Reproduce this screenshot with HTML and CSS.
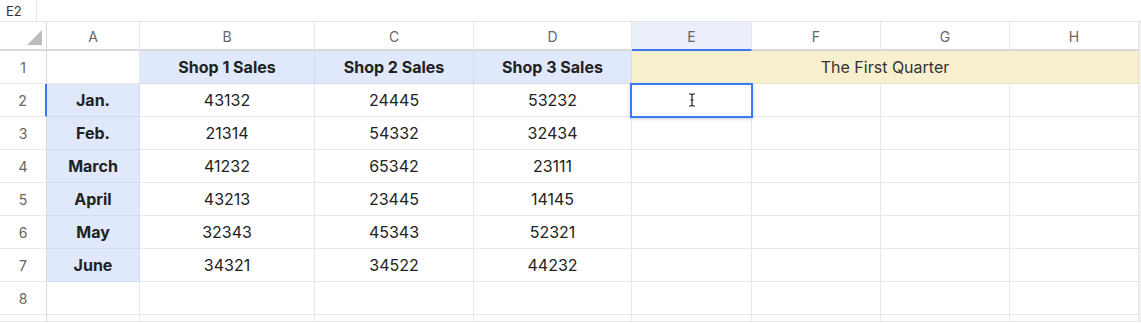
FILE: index.html
```html
<!DOCTYPE html>
<html lang="en">
<head>
  <meta charset="UTF-8">
  <meta name="viewport" content="width=device-width, initial-scale=1.0">
  <title>Sheet</title>
  <link rel="stylesheet" href="styles.css">
</head>
<body>
  <div class="formula-bar">
    <div class="name-box">E2</div>
    <div class="formula-input"></div>
  </div>

  <div class="sheet">
    <!-- column headers -->
    <div class="corner"><span class="corner-mark"></span></div>
    <div class="col-head">A</div>
    <div class="col-head">B</div>
    <div class="col-head">C</div>
    <div class="col-head">D</div>
    <div class="col-head active">E</div>
    <div class="col-head">F</div>
    <div class="col-head">G</div>
    <div class="col-head">H</div>
    <div class="edge"></div>

    <!-- row 1 -->
    <div class="row-head">1</div>
    <div class="cell"></div>
    <div class="cell title">Shop 1 Sales</div>
    <div class="cell title">Shop 2 Sales</div>
    <div class="cell title">Shop 3 Sales</div>
    <div class="cell merged">The First Quarter</div>
    <div class="edge"></div>

    <!-- row 2 -->
    <div class="row-head active">2</div>
    <div class="cell title">Jan.</div>
    <div class="cell">43132</div>
    <div class="cell">24445</div>
    <div class="cell">53232</div>
    <div class="cell selected">
      <svg class="ibeam" width="8" height="14" viewBox="0 0 8 14">
        <path d="M1 1h2l1 1 1-1h2M4 2v10M1 13h2l1-1 1 1h2M2.5 7h3" fill="none" stroke="#222" stroke-width="1.2"/>
      </svg>
    </div>
    <div class="cell"></div>
    <div class="cell"></div>
    <div class="cell"></div>
    <div class="edge"></div>

    <!-- row 3 -->
    <div class="row-head">3</div>
    <div class="cell title">Feb.</div>
    <div class="cell">21314</div>
    <div class="cell">54332</div>
    <div class="cell">32434</div>
    <div class="cell"></div>
    <div class="cell"></div>
    <div class="cell"></div>
    <div class="cell"></div>
    <div class="edge"></div>

    <!-- row 4 -->
    <div class="row-head">4</div>
    <div class="cell title">March</div>
    <div class="cell">41232</div>
    <div class="cell">65342</div>
    <div class="cell">23111</div>
    <div class="cell"></div>
    <div class="cell"></div>
    <div class="cell"></div>
    <div class="cell"></div>
    <div class="edge"></div>

    <!-- row 5 -->
    <div class="row-head">5</div>
    <div class="cell title">April</div>
    <div class="cell">43213</div>
    <div class="cell">23445</div>
    <div class="cell">14145</div>
    <div class="cell"></div>
    <div class="cell"></div>
    <div class="cell"></div>
    <div class="cell"></div>
    <div class="edge"></div>

    <!-- row 6 -->
    <div class="row-head">6</div>
    <div class="cell title">May</div>
    <div class="cell">32343</div>
    <div class="cell">45343</div>
    <div class="cell">52321</div>
    <div class="cell"></div>
    <div class="cell"></div>
    <div class="cell"></div>
    <div class="cell"></div>
    <div class="edge"></div>

    <!-- row 7 -->
    <div class="row-head">7</div>
    <div class="cell title">June</div>
    <div class="cell">34321</div>
    <div class="cell">34522</div>
    <div class="cell">44232</div>
    <div class="cell"></div>
    <div class="cell"></div>
    <div class="cell"></div>
    <div class="cell"></div>
    <div class="edge"></div>

    <!-- row 8 -->
    <div class="row-head">8</div>
    <div class="cell"></div>
    <div class="cell"></div>
    <div class="cell"></div>
    <div class="cell"></div>
    <div class="cell"></div>
    <div class="cell"></div>
    <div class="cell"></div>
    <div class="cell"></div>
    <div class="edge"></div>

    <!-- row 9 (cut off) -->
    <div class="row-head"></div>
    <div class="cell"></div>
    <div class="cell"></div>
    <div class="cell"></div>
    <div class="cell"></div>
    <div class="cell"></div>
    <div class="cell"></div>
    <div class="cell"></div>
    <div class="cell"></div>
    <div class="edge"></div>
  </div>
</body>
</html>
```

FILE: styles.css
```css
body {
  margin: 0;
  font-family: Inter, "Liberation Sans", Arial, sans-serif;
  color: #222;
  background: #fff;
  width: 1141px;
  height: 323px;
  overflow: hidden;
}

.formula-bar {
  display: flex;
  height: 22px;
  border-bottom: 1px solid #e4e4e4;
  box-sizing: border-box;
}

.name-box {
  width: 37px;
  padding-left: 6px;
  box-sizing: border-box;
  border-right: 1px solid #e4e4e4;
  font-size: 13px;
  line-height: 22px;
  color: #333;
}

.formula-input {
  flex: 1;
}

.sheet {
  display: grid;
  grid-template-columns: 47px 93px 175px 159px 158px 120px 129px 129px 129px 2px;
  grid-template-rows: 29px repeat(8, 33px) 7px;
}

.sheet > div {
  box-sizing: border-box;
  border-right: 1px solid #e8e8e8;
  border-bottom: 1px solid #e8e8e8;
  display: flex;
  align-items: center;
  justify-content: center;
  font-size: 16px;
}

.corner,
.col-head {
  border-bottom: 2px solid #d9d9d9 !important;
  color: #666;
  font-size: 14px !important;
  padding-top: 2px;
}

.corner {
  position: relative;
  border-right: 1px solid #d9d9d9 !important;
}

.corner-mark {
  position: absolute;
  right: 4px;
  bottom: 4px;
  width: 0;
  height: 0;
  border-left: 15px solid transparent;
  border-bottom: 15px solid #b9bcc0;
}

.col-head.active {
  background: #eaeff9;
  border-bottom: 2px solid #3b78f2 !important;
}

.row-head {
  color: #666;
  font-size: 14px !important;
  border-right: 1px solid #d9d9d9 !important;
}

.row-head.active {
  border-right: 2px solid #3b78f2 !important;
}

.edge {
  background: #f0f0f0;
  border-right: none !important;
  border-bottom: none !important;
}

.cell.title {
  background: #e0e8fc;
  border-color: #d3dcf2;
  font-weight: 700;
  color: #222;
}

.cell.merged {
  grid-column: span 4;
  background: #f8efcf;
  border-color: #e9e1c5;
  color: #333;
}

.cell.selected {
  position: relative;
}

.cell.selected::after {
  content: "";
  position: absolute;
  left: -2px;
  top: -1px;
  right: -2px;
  bottom: -2px;
  border: 2px solid #3b7cf5;
  box-shadow: 0 1px 3px rgba(0, 0, 0, 0.2);
}

.ibeam {
  margin-top: -1px;
  margin-left: 1px;
}
```
